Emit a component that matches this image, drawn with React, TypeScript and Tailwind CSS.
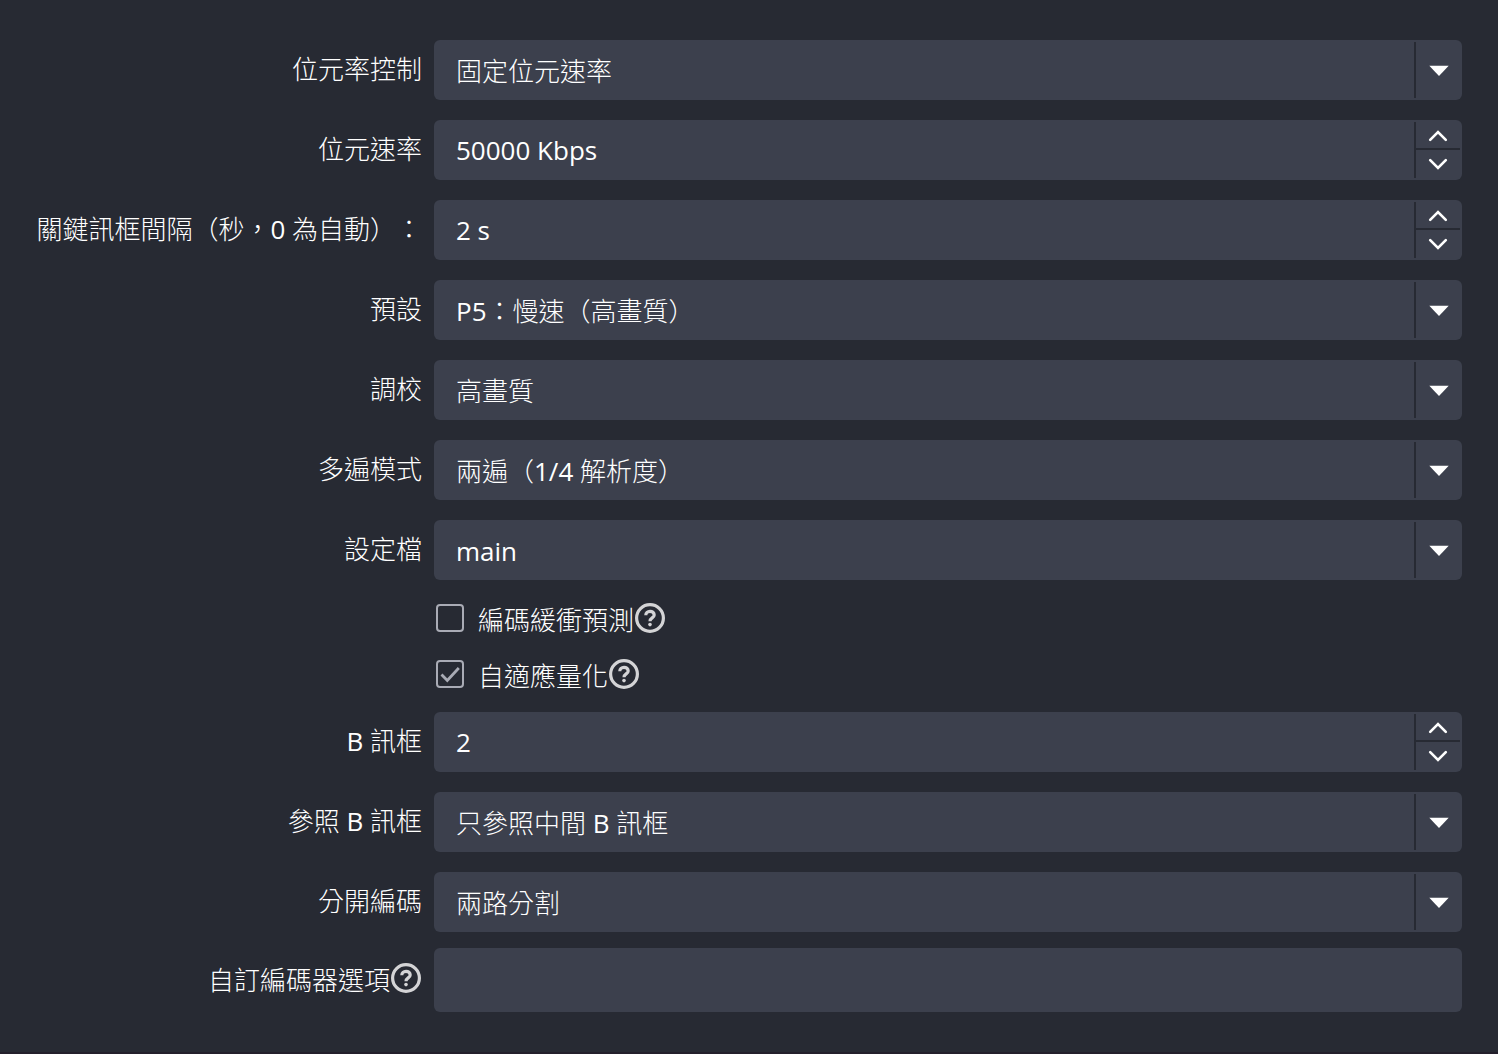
import React, { useId, useState } from "react";

export default function App() {
  return (
    <main className="min-h-screen border-b-2 border-[#231f2b] bg-[#272a33] pt-10 pr-9 pb-9 pl-9 font-['Open_Sans','Noto_Sans_CJK_TC_Light','Noto_Sans_CJK_TC',sans-serif] text-[26px] leading-9 text-white [text-spacing-trim:space-all]">
      <form className="flex flex-col gap-5">
        <SelectRow
          label="位元率控制"
          options={["固定位元速率", "可變位元速率"]}
        />
        <SpinRow label="位元速率" initial={50000} step={50} suffix=" Kbps" />
        <SpinRow
          label="關鍵訊框間隔（秒，0 為自動）："
          initial={2}
          suffix=" s"
        />
        <SelectRow label="預設" options={["P5：慢速（高畫質）"]} />
        <SelectRow label="調校" options={["高畫質"]} />
        <SelectRow label="多遍模式" options={["兩遍（1/4 解析度）"]} />
        <SelectRow label="設定檔" options={["main", "high"]} />
        <CheckRow label="編碼緩衝預測" />
        <CheckRow label="自適應量化" defaultChecked />
        <SpinRow label="B 訊框" initial={2} />
        <SelectRow label="參照 B 訊框" options={["只參照中間 B 訊框"]} />
        <div className="flex flex-col gap-4">
          <SelectRow label="分開編碼" options={["兩路分割"]} />
          <TextRow label="自訂編碼器選項" />
        </div>
      </form>
    </main>
  );
}

const rowClass = "grid grid-cols-[386px_1fr] items-center gap-3";
const labelClass = "pb-0.5 text-right whitespace-nowrap";
const fieldClass =
  "w-full rounded-md bg-[#3c404d] pl-[22px] outline-none focus-visible:ring-2 focus-visible:ring-[#476bd7]";

function SelectRow({ label, options }: { label: string; options: string[] }) {
  const id = useId();
  return (
    <div className={rowClass}>
      <label htmlFor={id} className={labelClass}>
        {label}
      </label>
      <div className="relative">
        <select
          id={id}
          className={`${fieldClass} h-15 appearance-none pt-0.5 pr-14`}
        >
          {options.map((option) => (
            <option key={option}>{option}</option>
          ))}
        </select>
        <span className="pointer-events-none absolute inset-y-0.5 right-0 flex w-12 items-center justify-center border-l-2 border-[#272a33]">
          <svg className="h-3 w-5" viewBox="0 0 20 12" fill="currentColor">
            <path d="M0.3 1.7h19.4L10 11.9z" />
          </svg>
        </span>
      </div>
    </div>
  );
}

function SpinRow({
  label,
  initial,
  step = 1,
  suffix = "",
}: {
  label: string;
  initial: number;
  step?: number;
  suffix?: string;
}) {
  const id = useId();
  const [value, setValue] = useState(initial);
  return (
    <div className={rowClass}>
      <label htmlFor={id} className={labelClass}>
        {label}
      </label>
      <div className="relative">
        <input
          id={id}
          type="text"
          inputMode="numeric"
          value={`${value}${suffix}`}
          onChange={(e) => setValue(parseInt(e.target.value, 10) || 0)}
          className={`${fieldClass} h-15 pr-14`}
        />
        <div className="absolute inset-y-0.5 right-0.5 flex w-[46px] flex-col divide-y-2 divide-[#272a33] border-l-2 border-[#272a33]">
          <button
            type="button"
            aria-label="增加"
            onClick={() => setValue(value + step)}
            className="flex h-7 items-center justify-center"
          >
            <Chevron d="M2.2 10.8l7.8-7.8 7.8 7.8" />
          </button>
          <button
            type="button"
            aria-label="減少"
            onClick={() => setValue(Math.max(0, value - step))}
            className="flex h-7 items-center justify-center"
          >
            <Chevron d="M2.2 2.2l7.8 7.8 7.8-7.8" />
          </button>
        </div>
      </div>
    </div>
  );
}

function CheckRow({
  label,
  defaultChecked,
}: {
  label: string;
  defaultChecked?: boolean;
}) {
  const id = useId();
  return (
    <div className={rowClass}>
      <div className="col-start-2 flex h-9 items-center">
        <span className="mr-3.5 ml-0.5 grid size-7 place-items-center">
          <input
            id={id}
            type="checkbox"
            defaultChecked={defaultChecked}
            className="peer col-start-1 row-start-1 size-7 appearance-none rounded-sm border-2 border-[#a9abb5]"
          />
          <svg
            className="pointer-events-none invisible col-start-1 row-start-1 size-7 text-[#a9abb5] peer-checked:visible"
            viewBox="0 0 28 28"
            fill="none"
            stroke="currentColor"
            strokeWidth="2.8"
          >
            <path d="M5.5 14.5l5.8 6L22.8 8" />
          </svg>
        </span>
        <label htmlFor={id} className="pt-1">
          {label}
        </label>
        <HelpIcon />
      </div>
    </div>
  );
}

function TextRow({ label }: { label: string }) {
  const id = useId();
  return (
    <div className={rowClass}>
      <div className="flex items-center justify-end pb-1">
        <label htmlFor={id} className="pt-1 whitespace-nowrap">
          {label}
        </label>
        <HelpIcon />
      </div>
      <input id={id} type="text" className={`${fieldClass} h-16 pr-[22px]`} />
    </div>
  );
}

function Chevron({ d }: { d: string }) {
  return (
    <svg
      className="h-3 w-5 overflow-visible"
      viewBox="0 0 20 12"
      fill="none"
      stroke="currentColor"
      strokeWidth="2.6"
      strokeLinecap="round"
    >
      <path d={d} />
    </svg>
  );
}

function HelpIcon() {
  return (
    <svg
      className="size-8 shrink-0 text-[#d4d4d6]"
      viewBox="0 0 32 32"
      fill="none"
      stroke="currentColor"
      strokeWidth="3.2"
    >
      <circle cx="16" cy="16" r="13.4" />
      <path d="M11.8 13.2c0-2.3 1.8-3.9 4.2-3.9s4.2 1.5 4.2 3.6c0 3-4.2 3-4.2 6.3" />
      <circle cx="16" cy="22.6" r="1.8" fill="currentColor" stroke="none" />
    </svg>
  );
}
